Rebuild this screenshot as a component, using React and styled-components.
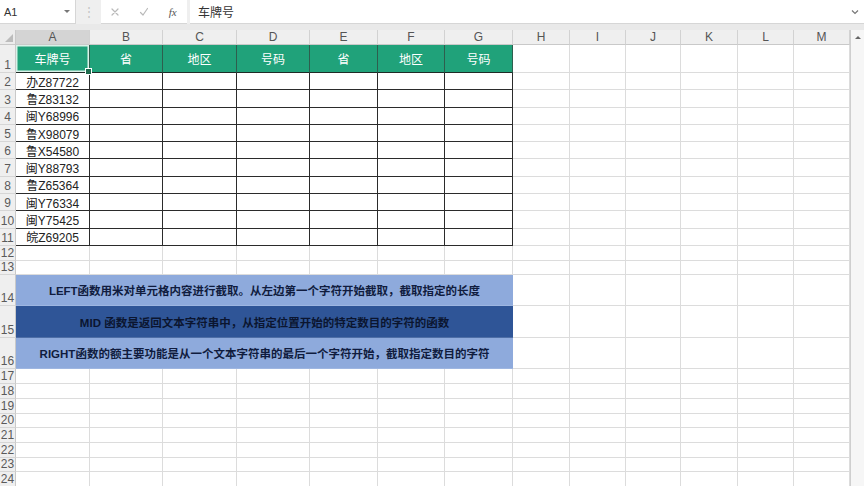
import React from 'react';
import styled, { createGlobalStyle, css } from 'styled-components';

const GlobalStyle = createGlobalStyle`
  html, body { margin: 0; padding: 0; width: 864px; height: 486px; overflow: hidden; background: #ffffff; }
  body { font-family: "Liberation Sans", "Noto Sans CJK SC", sans-serif; }
  #root { width: 864px; height: 486px; }
`;

const COLS = ['A', 'B', 'C', 'D', 'E', 'F', 'G', 'H', 'I', 'J', 'K', 'L', 'M'];
const COL_W = [74, 73, 74, 73, 68, 67, 68, 57, 56, 55, 57, 56, 56];
const ROW_H = [15, 28, ...Array(10).fill(17.3), 15, 14, 31.5, 31.5, 31.5, ...Array(8).fill(14.7)];

const HEADERS = ['车牌号', '省', '地区', '号码', '省', '地区', '号码'];
const PLATES = ['办Z87722', '鲁Z83132', '闽Y68996', '鲁X98079', '鲁X54580', '闽Y88793', '鲁Z65364', '闽Y76334', '闽Y75425', '皖Z69205'];
const NOTES = [
  { text: 'LEFT函数用米对单元格内容进行截取。从左边第一个字符开始截取，截取指定的长度', dark: false },
  { text: 'MID 函数是返回文本字符串中，从指定位置开始的特定数目的字符的函数', dark: true },
  { text: 'RIGHT函数的额主要功能是从一个文本字符串的最后一个字符开始，截取指定数目的字符', dark: false },
];

const Page = styled.div`
  width: 864px;
  height: 486px;
  display: flex;
  flex-direction: column;
  background: #e9e9e9;
  overflow: hidden;
`;

const Toolbar = styled.div`
  height: 24px;
  display: flex;
  align-items: stretch;
  background: #efefef;
  flex-shrink: 0;
`;

const NameBox = styled.div`
  width: 76px;
  background: #fff;
  border-right: 1px solid #d6d6d6;
  border-bottom: 1px solid #d6d6d6;
  display: flex;
  align-items: center;
  justify-content: space-between;
  padding: 0 5px 0 4px;
  box-sizing: border-box;
  font-size: 11px;
  color: #333;
`;

const Caret = styled.span`
  width: 0;
  height: 0;
  border-left: 3px solid transparent;
  border-right: 3px solid transparent;
  border-top: 3px solid #777;
`;

const Dots = styled.div`
  width: 25px;
  display: flex;
  align-items: center;
  justify-content: center;
  color: #c4c4c4;
  font-size: 12px;
`;

const FxBox = styled.div`
  width: 86px;
  margin-right: 3px;
  background: #fff;
  border-bottom: 1px solid #d6d6d6;
  display: grid;
  grid-template-columns: repeat(3, 1fr);
  align-items: center;
  justify-items: center;
`;

const FxText = styled.span`
  font-family: "Liberation Serif", serif;
  font-style: italic;
  font-size: 11px;
  color: #555;
`;

const FormulaInput = styled.div`
  flex: 1;
  background: #fff;
  border-bottom: 1px solid #d6d6d6;
  display: flex;
  align-items: center;
  justify-content: space-between;
  padding: 0 5px 0 8px;
  font-size: 12px;
  color: #333;
`;

const Spacer = styled.div`
  height: 6px;
  flex-shrink: 0;
  background: #e9e9e9;
`;

const Sheet = styled.div`
  flex: 1;
  display: flex;
  background: #fff;
  min-height: 0;
`;

const Grid = styled.div`
  display: grid;
  grid-template-columns: 16px ${COL_W.map((w) => w + 'px').join(' ')};
  grid-template-rows: ${ROW_H.map((h) => h + 'px').join(' ')};
`;

const Corner = styled.div`
  background: #ececec;
  border-right: 1px solid #c9c9c9;
  border-bottom: 1px solid #c9c9c9;
  box-sizing: border-box;
  position: relative;
  &::after {
    content: '';
    position: absolute;
    right: 2px;
    bottom: 2px;
    width: 0;
    height: 0;
    border-left: 8px solid transparent;
    border-bottom: 8px solid #bcbcbc;
  }
`;

const ColHead = styled.div`
  background: ${(p) => (p.$active ? '#d4d4d4' : '#efefef')};
  border-right: 1px solid #d2d2d2;
  border-bottom: 1px solid #c9c9c9;
  box-sizing: border-box;
  display: flex;
  align-items: center;
  justify-content: center;
  font-size: 12px;
  color: #555;
`;

const RowHead = styled.div`
  background: #efefef;
  border-right: 1px solid #c9c9c9;
  border-bottom: 1px solid #d6d6d6;
  box-sizing: border-box;
  display: flex;
  align-items: flex-end;
  justify-content: center;
  font-size: 12px;
  line-height: 1;
  color: #5a5a5a;
  overflow: hidden;
  padding-bottom: 1px;
`;

const kinds = {
  plain: css`
    background: #fff;
    border-right: 1px solid #dcdcdc;
    border-bottom: 1px solid #dcdcdc;
  `,
  table: css`
    background: #fff;
    border-right: 1px solid #2b2b2b;
    border-bottom: 1px solid #2b2b2b;
    color: #222;
    font-size: 12px;
  `,
  head: css`
    background: #20a27a;
    border-right: 1px solid #2e5e4e;
    border-bottom: 1px solid #1f2a26;
    color: #fff;
    font-size: 12px;
  `,
  light: css`
    background: #8eaadc;
    color: #101c3e;
  `,
  dark: css`
    background: #2f5597;
    color: #0b1530;
  `,
};

const Cell = styled.div`
  box-sizing: border-box;
  display: flex;
  align-items: center;
  justify-content: center;
  white-space: nowrap;
  position: relative;
  ${(p) => kinds[p.$kind || 'plain']}
  ${(p) => p.$span && css`grid-column: span ${p.$span};`}
  ${(p) =>
    p.$note &&
    css`
      font-size: 11.5px;
      font-weight: bold;
      border-bottom: 1px solid rgba(255, 255, 255, 0.15);
    `}
  ${(p) =>
    p.$selected &&
    css`
      box-shadow: inset 0 0 0 1.5px #d9f2e8;
    `}
`;

const Handle = styled.span`
  position: absolute;
  right: -3px;
  bottom: -3px;
  width: 5px;
  height: 5px;
  background: #1d6b4d;
  border: 1px solid #fff;
  z-index: 2;
`;

const Scrollbar = styled.div`
  width: 14px;
  flex-shrink: 0;
  background: #f6f6f6;
  border-left: 1px solid #cfcfcf;
  box-sizing: border-box;
  display: flex;
  flex-direction: column;
  align-items: center;
  padding-top: 6px;
`;

const UpArrow = styled.span`
  width: 0;
  height: 0;
  border-left: 3px solid transparent;
  border-right: 3px solid transparent;
  border-bottom: 3px solid #666;
`;

function Icon({ children }) {
  return (
    <svg width="10" height="10" viewBox="0 0 10 10" fill="none" stroke="#b9b9b9" strokeWidth="1.2" strokeLinecap="round" strokeLinejoin="round">
      {children}
    </svg>
  );
}

function PlainRest({ from, row }) {
  return COLS.slice(from).map((c) => <Cell key={`${row}-${c}`} />);
}

export default function App() {
  const rows = [];

  // Row 1: green headers
  rows.push(<RowHead key="rh1">1</RowHead>);
  HEADERS.forEach((h, i) =>
    rows.push(
      <Cell key={`1-${i}`} $kind="head" $selected={i === 0}>
        {h}
        {i === 0 && <Handle />}
      </Cell>
    )
  );
  rows.push(<PlainRest key="r1rest" from={7} row={1} />);

  // Rows 2-11: plates
  PLATES.forEach((p, r) => {
    const n = r + 2;
    rows.push(<RowHead key={`rh${n}`}>{n}</RowHead>);
    for (let i = 0; i < 7; i++) {
      rows.push(
        <Cell key={`${n}-${i}`} $kind="table">
          {i === 0 ? p : ''}
        </Cell>
      );
    }
    rows.push(<PlainRest key={`r${n}rest`} from={7} row={n} />);
  });

  // Rows 12-13 empty
  [12, 13].forEach((n) => {
    rows.push(<RowHead key={`rh${n}`}>{n}</RowHead>);
    rows.push(<PlainRest key={`r${n}rest`} from={0} row={n} />);
  });

  // Rows 14-16 notes
  NOTES.forEach((note, i) => {
    const n = 14 + i;
    rows.push(<RowHead key={`rh${n}`}>{n}</RowHead>);
    rows.push(
      <Cell key={`${n}-note`} $kind={note.dark ? 'dark' : 'light'} $span={7} $note>
        {note.text}
      </Cell>
    );
    rows.push(<PlainRest key={`r${n}rest`} from={7} row={n} />);
  });

  // Rows 17-24 empty
  for (let n = 17; n <= 24; n++) {
    rows.push(<RowHead key={`rh${n}`}>{n}</RowHead>);
    rows.push(<PlainRest key={`r${n}rest`} from={0} row={n} />);
  }

  return (
    <>
      <GlobalStyle />
      <Page>
        <Toolbar>
          <NameBox>
            <span>A1</span>
            <Caret />
          </NameBox>
          <Dots>⋮</Dots>
          <FxBox>
            <Icon>
              <path d="M2 2 L8 8 M8 2 L2 8" />
            </Icon>
            <Icon>
              <path d="M1.5 5.5 L4 8 L8.5 1.5" />
            </Icon>
            <FxText>fx</FxText>
          </FxBox>
          <FormulaInput>
            <span>车牌号</span>
            <svg width="8" height="6" viewBox="0 0 8 6" fill="none" stroke="#777" strokeWidth="1.2">
              <path d="M1 1.5 L4 4.5 L7 1.5" />
            </svg>
          </FormulaInput>
        </Toolbar>
        <Spacer />
        <Sheet>
          <Grid>
            <Corner />
            {COLS.map((c) => (
              <ColHead key={c} $active={c === 'A'}>
                {c}
              </ColHead>
            ))}
            {rows}
          </Grid>
          <Scrollbar>
            <UpArrow />
          </Scrollbar>
        </Sheet>
      </Page>
    </>
  );
}
